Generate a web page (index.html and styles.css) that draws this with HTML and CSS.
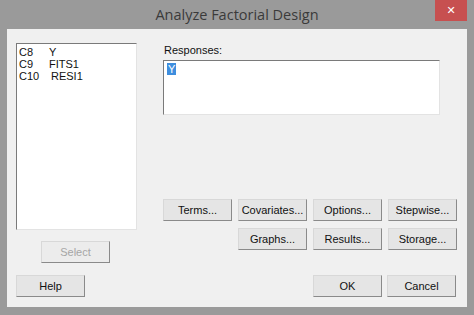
FILE: index.html
```html
<!DOCTYPE html>
<html lang="en">
<head>
    <meta charset="UTF-8">
    <title>Analyze Factorial Design</title>
    <link rel="stylesheet" href="styles.css">
</head>
<body>

<div class="window">
    <div class="titlebar">
        <span class="title">Analyze Factorial Design</span>
        <button class="close-btn">&#x2715;</button>
    </div>

    <div class="client">
        <div class="top">
            <div class="left-col">
                <ul class="var-list">
                    <li><span class="col">C8</span><span>Y</span></li>
                    <li><span class="col">C9</span><span>FITS1</span></li>
                    <li><span class="col">C10</span><span class="shift">RESI1</span></li>
                </ul>
                <button class="btn btn-select" disabled>Select</button>
            </div>

            <div class="right-col">
                <label class="field-label">Responses:</label>
                <div class="textbox"><span class="sel">Y</span></div>
                <div class="btn-rows">
                    <div class="btn-row">
                        <button class="btn">Terms...</button>
                        <button class="btn">Covariates...</button>
                        <button class="btn">Options...</button>
                        <button class="btn">Stepwise...</button>
                    </div>
                    <div class="btn-row">
                        <button class="btn">Graphs...</button>
                        <button class="btn">Results...</button>
                        <button class="btn">Storage...</button>
                    </div>
                </div>
            </div>
        </div>

        <div class="bottom">
            <button class="btn">Help</button>
            <div class="bottom-right">
                <button class="btn">OK</button>
                <button class="btn">Cancel</button>
            </div>
        </div>
    </div>
</div>

</body>
</html>
```

FILE: styles.css
```css
* {
    box-sizing: border-box;
}
html, body {
    margin: 0;
    height: 100%;
    overflow: hidden;
}
body {
    background-color: #999999;
    font-family: 'Liberation Sans', sans-serif;
}
.window {
    width: 474px;
    height: 315px;
    background-color: #9a9a9a;
    padding: 0 7px 8px 7px;
    display: flex;
    flex-direction: column;
}
/* Title bar */
.titlebar {
    height: 29px;
    display: flex;
    align-items: center;
    justify-content: center;
    position: relative;
}
.title {
    font-family: 'Open Sans', sans-serif;
    font-size: 14.5px;
    color: #3a3a3a;
    margin-top: -1px;
}
.close-btn {
    position: absolute;
    top: 0;
    right: 0;
    width: 32px;
    height: 21px;
    border: none;
    padding: 0;
    background-color: #c75050;
    color: #fff;
    font-size: 11px;
    font-weight: bold;
    font-family: 'DejaVu Sans', sans-serif;
}
/* Client area */
.client {
    flex: 1;
    background-color: #f0f0f0;
    padding: 14px 10px 0 9px;
    display: flex;
    flex-direction: column;
    font-size: 11px;
    color: #111;
}
.top {
    display: flex;
}
.left-col {
    width: 122px;
    display: flex;
    flex-direction: column;
}
.var-list {
    list-style: none;
    margin: 0;
    padding: 2px 0 0 2px;
    height: 187px;
    background-color: #fff;
    border-top: 1px solid #7a7a7a;
    border-left: 1px solid #7a7a7a;
    border-right: 1px solid #e3e3e3;
    border-bottom: 1px solid #e3e3e3;
}
.var-list li {
    height: 12px;
    line-height: 12px;
    display: flex;
}
.var-list .col {
    flex: none;
    width: 30px;
}
.var-list .shift {
    margin-left: 2px;
}
.btn {
    width: 69px;
    height: 22px;
    padding: 0;
    font-family: 'Liberation Sans', sans-serif;
    font-size: 11px;
    color: #111;
    background-color: #e5e5e5;
    border-top: 1px solid #d8d8d8;
    border-left: 1px solid #d8d8d8;
    border-right: 1px solid #8a8a8a;
    border-bottom: 1px solid #8a8a8a;
}
.btn-select {
    margin: 11px 0 0 25px;
    color: #a6a6a6;
    background-color: #ececec;
}
.right-col {
    margin-left: 26px;
    display: flex;
    flex-direction: column;
}
.field-label {
    height: 15px;
    line-height: 15px;
    margin-left: 1px;
}
.textbox {
    width: 277px;
    height: 55px;
    margin-top: 2px;
    padding: 2px 0 0 3px;
    background-color: #fff;
    border-top: 1px solid #7a7a7a;
    border-left: 1px solid #7a7a7a;
    border-right: 1px solid #e3e3e3;
    border-bottom: 1px solid #e3e3e3;
    line-height: 13px;
}
.sel {
    background-color: #3e8ede;
    color: #fff;
    padding: 0 1px;
}
.btn-rows {
    margin-top: 84px;
    display: flex;
    flex-direction: column;
    gap: 7px;
}
.btn-row {
    display: flex;
    justify-content: flex-end;
    gap: 6px;
}
/* Bottom buttons */
.bottom {
    margin-top: 12px;
    display: flex;
    justify-content: space-between;
    padding-right: 1px;
}
.bottom-right {
    display: flex;
    gap: 5px;
}
```
